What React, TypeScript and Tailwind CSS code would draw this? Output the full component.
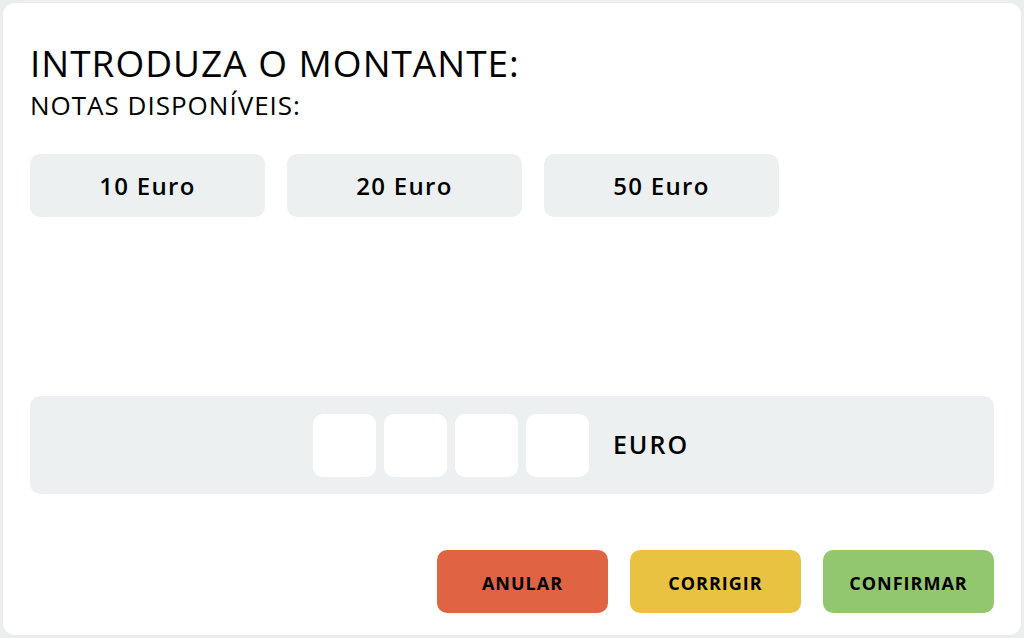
import React from 'react';

const NOTAS = ['10 Euro', '20 Euro', '50 Euro'];

const ACOES = [
    { label: 'ANULAR', cor: 'bg-[#e06444]' },
    { label: 'CORRIGIR', cor: 'bg-[#e9c241]' },
    { label: 'CONFIRMAR', cor: 'bg-[#93c76f]' }
];

const App: React.FC = () => {
    return (
        <div className="h-[638px] w-[1024px] bg-[#eaeeee] p-[3px] font-['Open_Sans',sans-serif] text-black">
            <div className="flex h-full flex-col rounded-[12px] bg-white px-[27px] pb-[22px] pt-[38px]">
                {/* Títulos */}
                <h1 className="text-[37px] leading-[44px] font-normal tracking-[1px]">INTRODUZA O MONTANTE:</h1>
                <p className="mt-[5px] text-[26px] leading-[30px] tracking-[1px]">NOTAS DISPONÍVEIS:</p>

                {/* Notas */}
                <div className="mt-[34px] flex gap-[22px]">
                    {NOTAS.map(nota => (
                        <button
                            key={nota}
                            className="flex h-[63px] w-[235px] items-center justify-center rounded-[10px] bg-[#edf0f1] text-[24px] font-semibold tracking-[1.3px]"
                        >
                            {nota}
                        </button>
                    ))}
                </div>

                <div className="flex-1" />

                {/* Montante */}
                <div className="flex h-[98px] items-center justify-center rounded-[10px] bg-[#edf0f1] pr-[22px]">
                    <div className="flex gap-[8px]">
                        {[0, 1, 2, 3].map(i => (
                            <div key={i} className="h-[63px] w-[63px] rounded-[10px] bg-white" />
                        ))}
                    </div>
                    <span className="ml-[24px] text-[25px] font-semibold tracking-[2px]">EURO</span>
                </div>

                {/* Ações */}
                <div className="mt-[56px] flex justify-end gap-[22px]">
                    {ACOES.map(acao => (
                        <button
                            key={acao.label}
                            className={`flex h-[63px] w-[171px] items-center justify-center rounded-[10px] pt-[3px] text-[18px] font-bold tracking-[1px] ${acao.cor}`}
                        >
                            {acao.label}
                        </button>
                    ))}
                </div>
            </div>
        </div>
    );
};

export default App;
